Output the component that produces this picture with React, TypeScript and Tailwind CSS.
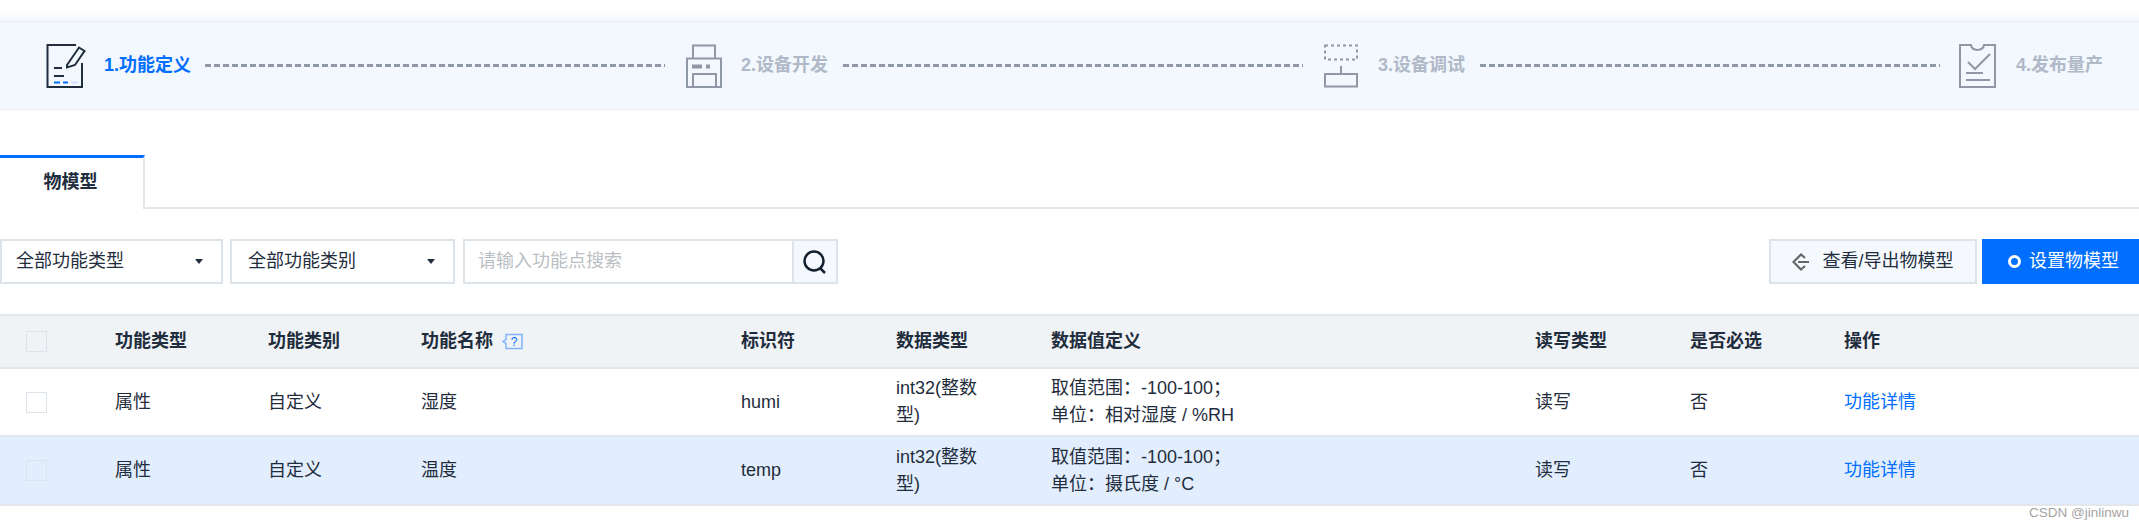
import React from 'react';

const font = { fontFamily: '"Microsoft YaHei", "Liberation Sans", "Noto Sans CJK SC", sans-serif' };

const DocIcon = () => (
  <svg width="40" height="46" viewBox="0 0 40 46" fill="none" className="shrink-0">
    <path d="M36 20V44H1.5V2H30" stroke="#1f2d3d" strokeWidth="2" />
    <path d="M21 22L33 4.5L38.5 8L29 22L21 24.5Z" fill="none" stroke="#1f2d3d" strokeWidth="2" />
    <path d="M8 25H16M8 33H18" stroke="#1f2d3d" strokeWidth="2" />
    <path d="M8 39.5H14M17 39.5H22" stroke="#006eff" strokeWidth="2" />
    <path d="M25 39.5H32" stroke="#cfe2ff" strokeWidth="2" />
  </svg>
);

const PrinterIcon = () => (
  <svg width="36" height="44" viewBox="0 0 36 44" fill="none" className="shrink-0">
    <path d="M7 14V1.5H29V14" stroke="#8f98a6" strokeWidth="2" />
    <path d="M1 14.5H35V43H1Z" stroke="#8f98a6" strokeWidth="2" />
    <path d="M7 43V30H30V43" stroke="#8f98a6" strokeWidth="2" />
    <path d="M6 20.5H16V24.5H6Z" fill="#8f98a6" />
    <path d="M20 20.5H24V24.5H20Z" fill="#8f98a6" />
  </svg>
);

const DebugIcon = () => (
  <svg width="34" height="44" viewBox="0 0 34 44" fill="none" className="shrink-0">
    <path d="M1 1.5H33V15.5H1Z" stroke="#8f98a6" strokeWidth="2" strokeDasharray="3 3" />
    <path d="M17 22V30" stroke="#8f98a6" strokeWidth="2" />
    <path d="M1 30H33V42.5H1Z" stroke="#8f98a6" strokeWidth="2" />
  </svg>
);

const ReleaseIcon = () => (
  <svg width="37" height="44" viewBox="0 0 37 44" fill="none" className="shrink-0">
    <path d="M1 1H12C13 7.5 24 7.5 25 1H36V43H1Z" stroke="#8f98a6" strokeWidth="2" />
    <path d="M9 18L16 25L31 10" stroke="#8f98a6" strokeWidth="2" />
    <path d="M7 29H24M7 36H31" stroke="#8f98a6" strokeWidth="2" />
  </svg>
);

const Dash = ({ className }: { className: string }) => (
  <div
    className={`h-[3px] flex-1 bg-[repeating-linear-gradient(90deg,#8f98a6_0,#8f98a6_6px,transparent_6px,transparent_9px)] ${className}`}
  />
);

const Caret = () => (
  <span className="h-0 w-0 border-x-[4px] border-t-[5px] border-x-transparent border-t-[#1f2d3d]" />
);

const Select = ({ label, width }: { label: string; width: string }) => (
  <div className={`flex h-full items-center justify-between border-2 border-[#dde3ea] bg-white pr-[18px] text-[18px] text-[#1f2d3d] ${width}`}>
    <span>{label}</span>
    <Caret />
  </div>
);

const Row = ({ name, id, unit, active, height }: { name: string; id: string; unit: string; active?: boolean; height: string }) => (
  <tr className={`border-b-2 border-[#e3e7ec] text-[18px] text-[#1f2d3d] ${height} ${active ? 'bg-[#e2eefd]' : 'bg-white'}`}>
    <td className="pl-[26px]">
      <div className={`h-[21px] w-[21px] border border-[#dde3ea] ${active ? 'bg-[#e2eefd]' : 'bg-white'}`} />
    </td>
    <td>属性</td>
    <td>自定义</td>
    <td>{name}</td>
    <td>{id}</td>
    <td className="pr-[52px] leading-[27px]">int32(整数型)</td>
    <td className="leading-[27px]">
      <div>取值范围：-100-100；</div>
      <div>单位：{unit}</div>
    </td>
    <td>读写</td>
    <td>否</td>
    <td className="text-[#006eff]">功能详情</td>
  </tr>
);

export default function App() {
  return (
    <div className="relative h-[531px] w-[2139px] overflow-hidden bg-white" style={font}>
      <div className="h-[21px] bg-gradient-to-b from-white from-50% to-[#f3f7fe]" />

      {/* stepper */}
      <div className="flex h-[89px] items-center border-y border-[#e9eef5] bg-[#f3f7fe] pl-[46px] pr-[36px] text-[18px] font-bold text-[#b0b9c8]">
        <DocIcon />
        <span className="ml-[18px] text-[#006eff]">1.功能定义</span>
        <Dash className="ml-[14px] mr-[21px]" />
        <PrinterIcon />
        <span className="ml-[19px]">2.设备开发</span>
        <Dash className="ml-[15px] mr-[21px]" />
        <DebugIcon />
        <span className="ml-[20px]">3.设备调试</span>
        <Dash className="ml-[15px] mr-[19px]" />
        <ReleaseIcon />
        <span className="ml-[20px]">4.发布量产</span>
      </div>

      {/* tabs */}
      <div className="mt-[45px] flex h-[54px] border-b-2 border-[#e3e6ea]">
        <div className="-mb-[2px] flex w-[145px] items-center justify-center border-r-2 border-t-[3px] border-r-[#e3e6ea] border-t-[#006eff] bg-white pb-[2px] pr-[2px] text-[18px] font-bold text-[#1f2d3d]">
          物模型
        </div>
      </div>

      {/* toolbar */}
      <div className="mt-[30px] flex h-[45px] items-center justify-between">
        <div className="flex h-full items-center">
          <Select label="全部功能类型" width="w-[223px] pl-[14px]" />
          <Select label="全部功能类别" width="ml-[7px] w-[225px] pl-[16px]" />
          <div className="ml-[8px] flex h-full w-[375px] border-2 border-[#dde3ea]">
            <div className="flex flex-1 items-center pl-[13px] text-[18px] text-[#bbbfc5]">请输入功能点搜索</div>
            <div className="flex w-[44px] items-center justify-center border-l-2 border-[#dde3ea] bg-[#f5f9fe]">
              <svg width="26" height="26" viewBox="0 0 26 26" fill="none">
                <circle cx="12" cy="12" r="9.5" stroke="#14202e" strokeWidth="2.5" />
                <path d="M18 19L23 24" stroke="#14202e" strokeWidth="2.5" />
              </svg>
            </div>
          </div>
        </div>
        <div className="flex h-full items-center text-[18px]">
          <div className="flex h-full w-[208px] items-center justify-center gap-[12px] border-2 border-[#dde3ea] bg-[#f5f9fe] text-[#1f2d3d]">
            <svg width="18" height="18" viewBox="0 0 18 18" fill="none">
              <path d="M13 5L9 1.5L1.5 9L9 16.5L13 13" stroke="#666" strokeWidth="2.2" />
              <path d="M6 9H17" stroke="#666" strokeWidth="2" />
            </svg>
            <span>查看/导出物模型</span>
          </div>
          <div className="ml-[5px] flex h-full w-[157px] items-center gap-[8px] bg-[#006eff] pl-[26px] text-white">
            <span className="h-[13px] w-[13px] rounded-full border-[3px] border-white" />
            <span>设置物模型</span>
          </div>
        </div>
      </div>

      {/* table */}
      <table className="mt-[30px] w-full table-fixed border-collapse text-left">
        <colgroup>
          <col className="w-[115px]" />
          <col className="w-[153px]" />
          <col className="w-[153px]" />
          <col className="w-[320px]" />
          <col className="w-[155px]" />
          <col className="w-[155px]" />
          <col className="w-[484px]" />
          <col className="w-[155px]" />
          <col className="w-[154px]" />
          <col />
        </colgroup>
        <thead>
          <tr className="h-[53px] border-y-2 border-[#e3e7ec] bg-[#f0f3f6] text-[18px] font-bold text-[#1f2d3d]">
            <th className="pl-[26px]">
              <div className="h-[21px] w-[21px] border border-[#dde3ea] bg-[#f0f3f6]" />
            </th>
            <th>功能类型</th>
            <th>功能类别</th>
            <th>
              <span className="flex items-center gap-[9px]">
                功能名称
                <svg width="21" height="17" viewBox="0 0 21 17" fill="none">
                  <path d="M4 1.5H20V15.5H4V10.5L1 8.5L4 6.5Z" stroke="#7fb3ff" strokeWidth="1.5" />
                  <text x="12" y="13" textAnchor="middle" fontSize="12" fontWeight="400" fill="#006eff">?</text>
                </svg>
              </span>
            </th>
            <th>标识符</th>
            <th>数据类型</th>
            <th>数据值定义</th>
            <th>读写类型</th>
            <th>是否必选</th>
            <th>操作</th>
          </tr>
        </thead>
        <tbody>
          <Row name="湿度" id="humi" unit="相对湿度 / %RH" height="h-[68px]" />
          <Row name="温度" id="temp" unit="摄氏度 / °C" height="h-[69px]" active />
        </tbody>
      </table>

      <div className="absolute bottom-[8px] right-[10px] text-[13.5px] text-[#a4a4a4]">CSDN @jinlinwu</div>
    </div>
  );
}
